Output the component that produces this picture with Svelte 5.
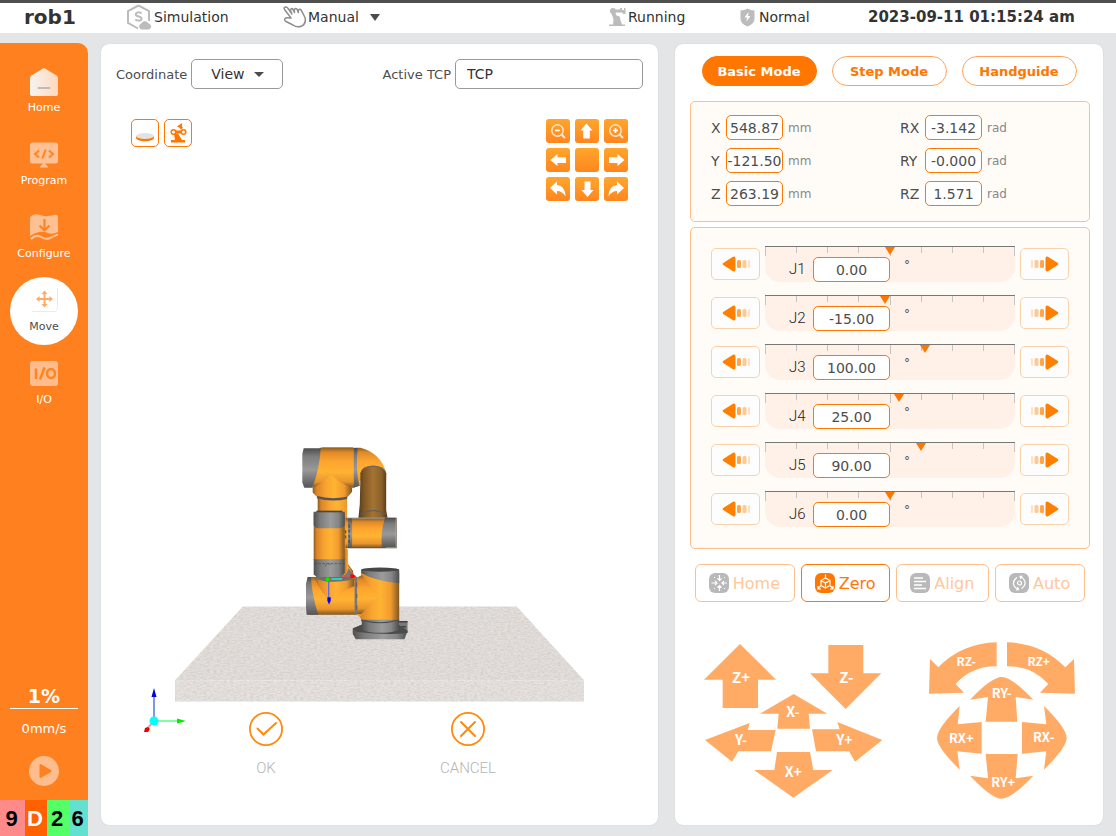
<script lang="ts">
  type Arrow = {
    label: string;
    x: number;
    y: number;
    w: number;
    h: number;
    d: string;
    tx: number;
    ty: number;
    size: number;
  };

  const modes = ["Basic Mode", "Step Mode", "Handguide"];
  let mode = $state("Basic Mode");
  let page = $state("Move");
  let coordinate = $state("View");
  let tcp = $state("TCP");

  const pages = ["Home", "Program", "Configure", "Move", "I/O"];

  const position = $state([
    { axis: "X", value: "548.87" },
    { axis: "Y", value: "-121.50" },
    { axis: "Z", value: "263.19" },
  ]);
  const rotation = $state([
    { axis: "RX", value: "-3.142" },
    { axis: "RY", value: "-0.000" },
    { axis: "RZ", value: "1.571" },
  ]);
  const joints = $state([
    { name: "J1", value: "0.00" },
    { name: "J2", value: "-15.00" },
    { name: "J3", value: "100.00" },
    { name: "J4", value: "25.00" },
    { name: "J5", value: "90.00" },
    { name: "J6", value: "0.00" },
  ]);

  // joint range is -360..360
  const markerPos = (value: string) => 50 + (Number(value) / 720) * 100;

  const checksum = ["9", "D", "2", "6"];

  // three canvas units to one pixel
  const linear = { x: 42, y: 42, w: 537, h: 465 };
  const linearArrows: Arrow[] = [
    { label: "Z+", x: 42, y: 42, w: 216, h: 192, d: "M150 42 258 149H204V234H98V149H42Z", tx: 153, ty: 158, size: 45 },
    { label: "Z-", x: 359, y: 45, w: 214, h: 192, d: "M414 45H519V130H573L466 237 359 130H414Z", tx: 468, ty: 158, size: 45 },
    { label: "X-", x: 210, y: 192, w: 202, h: 104, d: "M311 192 412 251H356L360 296H262L266 251H210Z", tx: 309, ty: 261, size: 42 },
    { label: "X+", x: 191, y: 367, w: 236, h: 137, d: "M260 367H359L369 421H427L309 504 191 421H252Z", tx: 309, ty: 443, size: 42 },
    { label: "Y-", x: 45, y: 280, w: 212, h: 116, d: "M45 331 179 280 173 301H257L243 365H145L126 396Z", tx: 153, ty: 346, size: 42 },
    { label: "Y+", x: 367, y: 277, w: 211, h: 119, d: "M578 331 443 277 450 299H367L379 365H478L496 396Z", tx: 464, ty: 346, size: 42 },
  ];
  const angular = { x: 717, y: 36, w: 438, h: 471 };
  const angularArrows: Arrow[] = [
    { label: "RZ-", x: 717, y: 36, w: 204, h: 156, d: "M920 37Q815 40 745 112L720 87 717 191 822 188 797 162Q845 108 920 109Z", tx: 829, ty: 108, size: 36 },
    { label: "RZ+", x: 950, y: 36, w: 205, h: 156, d: "M950 37Q1055 40 1125 112L1151 87 1154 191 1049 188 1074 162Q1026 108 950 109Z", tx: 1045, ty: 108, size: 36 },
    { label: "RY-", x: 840, y: 141, w: 190, h: 135, d: "M840 209Q905 141 935 141 965 141 1030 209L977 201 982 275H887L894 201Z", tx: 935, ty: 204, size: 39 },
    { label: "RX+", x: 741, y: 228, w: 135, h: 191, d: "M809 228Q741 295 741 324 741 352 809 419L802 364 875 371V276L803 283Z", tx: 814, ty: 339, size: 39 },
    { label: "RX-", x: 995, y: 228, w: 134, h: 191, d: "M1061 228Q1129 295 1129 324 1129 352 1061 419L1068 364 995 371V276L1068 283Z", tx: 1060, ty: 336, size: 39 },
    { label: "RY+", x: 840, y: 373, w: 190, h: 134, d: "M840 438Q905 507 935 507 965 507 1030 438L977 446 983 373H887L894 446Z", tx: 940, ty: 473, size: 39 },
  ];
</script>

{#snippet poseRow(row: { axis: string; value: string }, unit: string)}
  <div class="pose-row">
    <label for="pose-{row.axis}">{row.axis}</label>
    <input id="pose-{row.axis}" class="value" bind:value={row.value} />
    <span class="unit">{unit}</span>
  </div>
{/snippet}

{#snippet jogIcon()}
  <svg width="28" height="16" viewBox="0 0 28 16">
    <path d="M1.2 7 11 .8Q13.5 0 13.5 2.500V13.500Q13.5 16 11 15.200L1.200 9Q0 8 1.2 7Z" fill="#ff8000" />
    <rect x="15" y="4" width="4" height="8" rx="1.5" fill="#ffa64d" />
    <rect x="20.5" y="4" width="4" height="8" rx="1.5" fill="#ffc995" />
    <rect x="26" y="4" width="2" height="8" rx="1" fill="#ffe0c2" />
  </svg>
{/snippet}

{#snippet jogPad(box: { x: number; y: number; w: number; h: number }, arrows: Arrow[], cls: string)}
  <div class="pad {cls}">
    {#each arrows as a (a.label)}
      <button
        class="jog-arrow"
        aria-label="Jog {a.label}"
        style="left:{((a.x - box.x) / box.w) * 100}%;top:{((a.y - box.y) / box.h) * 100}%;width:{(a.w / box.w) * 100}%;height:{(a.h / box.h) * 100}%;"
      >
        <svg viewBox="{a.x} {a.y} {a.w} {a.h}">
          <path d={a.d} />
          <text x={a.tx} y={a.ty} font-size={a.size}>{a.label}</text>
        </svg>
      </button>
    {/each}
  </div>
{/snippet}

<div class="app">
  <header class="topbar">
    <h1>rob1</h1>
    <div class="status">
      <svg width="26" height="26" viewBox="0 0 26 26" fill="none" stroke="#bcbcbc">
        <path d="M12.500 1.500 2 7.200V18.800L12 24.500M12.500 1.500 23 7.200V17" stroke-width="2" />
        <path d="M15.500 9.500C14.500 7.800 9.800 7.900 9.800 10.400 9.800 13.200 15.600 11.800 15.600 14.700 15.600 17.200 10.600 17.100 9.400 15.200" stroke-width="2" />
        <path d="M15 25A3.200 3.200 0 0 1 15.500 19.500 4 4 0 0 1 22.500 20 2.600 2.600 0 0 1 23 25Z" fill="#bcbcbc" />
      </svg>
      <span>Simulation</span>
    </div>
    <button class="status manual">
      <svg width="24" height="22" viewBox="0 0 24 22" fill="none" stroke="#8d8d8d" stroke-width="1.5" stroke-linejoin="round">
        <path d="M8 12 1.500 3.500Q.5 1.500 2.500 1 4 .8 5 2.300L9 8 7.500 4.500Q7.400 2.500 9.500 2.600L11.500 6.500 11.300 3.500Q12.500 1.800 14 3L15.300 6.500 15.500 4Q17 2.500 18.200 4.200L22 11.500Q23.500 17 19 20 14 22 10 19L3 15.500Q.5 13.500 2.500 12 4 11.300 8 12Z" />
      </svg>
      <span>Manual</span>
      <i class="caret"></i>
    </button>
    <div class="status">
      <svg width="18" height="20" viewBox="0 0 18 20" fill="#bcbcbc">
        <circle cx="5" cy="4" r="3" />
        <path d="M5 2.500H12V1H14V3H16V1H17.500V7H15.500L14 5.500H7Z" />
        <path d="M3 5.500 7 5 9.500 10.500 5.500 12Z" />
        <circle cx="9" cy="12" r="3.2" />
        <path d="M5.500 12H12L14 17.500H17V19H1V17.500H5Z" />
      </svg>
      <span>Running</span>
    </div>
    <div class="status normal">
      <svg width="15" height="19" viewBox="0 0 15 19">
        <path d="M7.500.5Q10.500 2.500 14.500 2.500V11Q14.500 15.500 7.500 18.500 .5 15.500.5 11V2.500Q4.500 2.500 7.500.5Z" fill="#bcbcbc" />
        <path d="M8.500 4 4.500 9.500H7L6.500 13.500 10.500 8H8Z" fill="#fff" />
      </svg>
      <span>Normal</span>
    </div>
    <time datetime="2023-09-11T01:15:24">2023-09-11 01:15:24 am</time>
  </header>

  <div class="body">
    <nav class="sidebar">
      {#each pages as name (name)}
        <button class="nav-item" class:active={page === name} onclick={() => (page = name)}>
          <svg width="28" height="28" viewBox="0 0 28 28">
            {#if name === "Home"}
              <defs>
                <linearGradient id="home-fill">
                  <stop offset="0" stop-color="#f6f3f1" />
                  <stop offset="1" stop-color="#ffd9bb" />
                </linearGradient>
              </defs>
              <path d="M13 .5Q14 0 15 .5L26.500 7.500Q28 8.500 28 10V26Q28 28 26 28H2Q0 28 0 26V10Q0 8.500 1.500 7.500Z" fill="url(#home-fill)" />
              <rect x="7.5" y="19" width="13" height="2" rx="1" fill="#bbb" />
            {:else if name === "Program"}
              <rect y="1.5" width="28" height="21" rx="2.5" fill="#ffc093" />
              <path d="M14 21 18.500 26.500H9.500Z" fill="#ffc093" />
              <path d="M9 9.500 5 13 9 16.500M19 9.500 23 13 19 16.500M15.700 8.500 12.300 17.500" fill="none" stroke="#ff8521" stroke-width="2" />
            {:else if name === "Configure"}
              <path d="M0 4Q0 2 2 1.500 6-.5 10 1T18 2 24 1Q28 0 28 3V18Q22 21 18 19T9 18 0 22Z" fill="#ffc093" />
              <path d="M14.500 5V16M9.500 11.500 14.500 16.500 19.500 11.500" fill="none" stroke="#ff8521" stroke-width="2.2" />
              <path d="M1 25Q6 20 11 23T20 24 28 20.500" fill="none" stroke="#ffc093" stroke-width="2" />
            {:else if name === "Move"}
              <path d="M27.500 1V20Q27.500 24.500 24 24.500H2" fill="none" stroke="#ffe6d2" />
              <path d="M14.500 5V19M7.500 12H21.500" stroke="#ffab66" stroke-width="2" />
              <path d="M14.500 3.500 17.500 7H11.500ZM14.500 20.500 17.500 17H11.500ZM6 12 9.500 9V15ZM23 12 19.500 9V15Z" fill="#ffab66" />
            {:else}
              <rect y="1" width="28" height="25" rx="3" fill="#ffbd8d" />
              <path d="M6 8.500V19M10 19.500 14.500 7.500" stroke="#ff8521" stroke-width="2.5" />
              <ellipse cx="21" cy="13.5" rx="4" ry="4.4" fill="none" stroke="#ff8521" stroke-width="2.5" />
            {/if}
          </svg>
          <span>{name}</span>
        </button>
      {/each}

      <div class="speed">
        <strong>1%</strong>
        <span>0mm/s</span>
        <button class="play" aria-label="Play">
          <svg width="30" height="30" viewBox="0 0 30 30">
            <circle cx="15" cy="15" r="15" fill="#ffbd8e" />
            <path d="M10.500 9Q10.500 7.500 12 8.200L22 14Q23 15 22 16L12 21.800Q10.500 22.500 10.500 21Z" fill="#ff801e" />
          </svg>
        </button>
      </div>
      <div class="checksum">
        {#each checksum as char, i (i)}
          <span class="c{i}">{char}</span>
        {/each}
      </div>
    </nav>

    <main class="workspace">
      <section class="card scene-card">
        <div class="fields">
          <div class="field">
            <label for="coordinate">Coordinate</label>
            <div class="select">
              <select id="coordinate" bind:value={coordinate}>
                <option>View</option>
                <option>Base</option>
                <option>Tool</option>
              </select>
              <i class="caret small"></i>
            </div>
          </div>
          <div class="field">
            <label for="tcp">Active TCP</label>
            <input id="tcp" class="tcp" bind:value={tcp} />
          </div>
        </div>

        <div class="toolbar">
          <div class="toggles">
            <button aria-label="Toggle table">
              <svg width="20" height="20" viewBox="0 0 20 20">
                <path d="M1 13V14.500C1 19.500 19 19.500 19 14.500V13Z" fill="#ff7600" />
                <ellipse cx="10" cy="13" rx="9" ry="3" fill="#e2e2e2" />
              </svg>
            </button>
            <button aria-label="Toggle robot">
              <svg width="20" height="20" viewBox="0 0 20 20" fill="#ff7600">
                <path d="M3 17H17V19.500H3ZM6 11 10 10.500 14 17H7ZM9 3.500 14 0V3.500L15 5 13 6.500 11.500 4.800Z" />
                <path d="M7 9H13" stroke="#ff7600" stroke-width="3" />
                <circle cx="5.5" cy="9" r="2.3" fill="#fff" stroke="#ff7600" stroke-width="1.5" />
                <circle cx="15.5" cy="9" r="2.3" fill="#fff" stroke="#ff7600" stroke-width="1.5" />
              </svg>
            </button>
          </div>
          <div class="camera">
            <button aria-label="Zoom out">
              <svg width="24" height="24" viewBox="0 0 24 24" fill="none" stroke="#ffe9d2" stroke-width="1.4">
                <circle cx="11.5" cy="11.5" r="5.7" />
                <path d="M15.500 15.500 19 19" stroke-width="2" />
                <path d="M9 11.500H14" stroke="#fff" stroke-width="1.6" />
              </svg>
            </button>
            <button aria-label="Pan up">
              <svg width="24" height="24" viewBox="0 0 24 24" fill="#fff"><path d="M11.500 4.500 17.500 11.500H14.800V19.500H8.200V11.500H5.500Z" /></svg>
            </button>
            <button aria-label="Zoom in">
              <svg width="24" height="24" viewBox="0 0 24 24" fill="none" stroke="#ffe9d2" stroke-width="1.4">
                <circle cx="11.5" cy="11.5" r="5.7" />
                <path d="M15.500 15.500 19 19" stroke-width="2" />
                <path d="M9 11.500H14M11.500 9V14" stroke="#fff" stroke-width="1.6" />
              </svg>
            </button>
            <button aria-label="Pan left">
              <svg width="24" height="24" viewBox="0 0 24 24" fill="#fff"><path d="M4.500 12 11.500 6V9.200H20V15H11.500V18Z" /></svg>
            </button>
            <button aria-label="Reset view"></button>
            <button aria-label="Pan right">
              <svg width="24" height="24" viewBox="0 0 24 24" fill="#fff"><path d="M20.500 12 13.500 6V9.200H5V15H13.500V18Z" /></svg>
            </button>
            <button aria-label="Orbit left">
              <svg width="24" height="24" viewBox="0 0 24 24" fill="#fff"><path d="M4 11 11 4.500V8Q19.500 9 19.500 19.500 16.500 14 11 14V17.500Z" /></svg>
            </button>
            <button aria-label="Pan down">
              <svg width="24" height="24" viewBox="0 0 24 24" fill="#fff"><path d="M12.500 20 18.500 13H15.500V4.500H9.500V13H6.500Z" /></svg>
            </button>
            <button aria-label="Orbit right">
              <svg width="24" height="24" viewBox="0 0 24 24" fill="#fff"><path d="M20 11 13 4.500V8Q4.500 9 4.500 19.500 7.500 14 13 14V17.500Z" /></svg>
            </button>
          </div>
        </div>

        <svg class="scene" viewBox="45 54 1224 762" aria-label="Robot model">
          <defs>
            <filter id="stone" x="0" y="0" width="1" height="1">
              <feTurbulence type="fractalNoise" baseFrequency=".1 .22" numOctaves="3" seed="4" />
              <feColorMatrix values="0 0 0 0 .5  0 0 0 0 .42  0 0 0 0 .4  .8 0 0 0 -.28" />
              <feComposite in2="SourceGraphic" operator="in" result="grain" />
              <feMerge>
                <feMergeNode in="SourceGraphic" />
                <feMergeNode in="grain" />
              </feMerge>
            </filter>
            <linearGradient id="tube-v">
              <stop offset="0" stop-color="#8f5e20" />
              <stop offset=".1" stop-color="#db8528" />
              <stop offset=".35" stop-color="#faa52f" />
              <stop offset=".55" stop-color="#ffb333" />
              <stop offset=".8" stop-color="#f19b2e" />
              <stop offset="1" stop-color="#805722" />
            </linearGradient>
            <linearGradient id="tube-h" x2="0" y2="1">
              <stop offset="0" stop-color="#8f5e20" />
              <stop offset=".12" stop-color="#df8a29" />
              <stop offset=".35" stop-color="#ffa52f" />
              <stop offset=".6" stop-color="#ffb333" />
              <stop offset=".85" stop-color="#e9952d" />
              <stop offset="1" stop-color="#7e5520" />
            </linearGradient>
            <linearGradient id="tube-dark">
              <stop offset="0" stop-color="#553b19" />
              <stop offset=".2" stop-color="#805826" />
              <stop offset=".5" stop-color="#a57331" />
              <stop offset=".8" stop-color="#8b602a" />
              <stop offset="1" stop-color="#4b3518" />
            </linearGradient>
            <linearGradient id="metal-v">
              <stop offset="0" stop-color="#505050" />
              <stop offset=".2" stop-color="#7a7a7a" />
              <stop offset=".55" stop-color="#9c9c9c" />
              <stop offset=".8" stop-color="#858585" />
              <stop offset="1" stop-color="#4e4e4e" />
            </linearGradient>
            <linearGradient id="metal-h" x2="0" y2="1">
              <stop offset="0" stop-color="#4d4d4d" />
              <stop offset=".2" stop-color="#7c7c7c" />
              <stop offset=".55" stop-color="#999" />
              <stop offset="1" stop-color="#555" />
            </linearGradient>
          </defs>

          <g filter="url(#stone)">
            <path d="M248 531H1068L1269 752H45Z" fill="#e3dfdc" />
            <path d="M45 752H1269V816H45Z" fill="#e6e2df" />
          </g>

          <!-- upper arm and elbow -->
          <path d="M582 56H600Q660 72 677 130V155H598V170L582 175Z" fill="url(#tube-h)" />
          <path d="M598 225 600 135Q604 112 638 111 672 112 677 135V243L681 266H594Z" fill="url(#tube-dark)" />
          <path d="M600 135Q604 112 638 111 672 112 677 135M600 255Q638 233 677 255" fill="none" stroke="#5e5e5e" stroke-width="3" />
          <path d="M472 200H560V400L578 425V445H472Z" fill="url(#tube-v)" />
          <path d="M478 56H582V176H456Z" fill="url(#tube-h)" />
          <path d="M430 58H481Q478 120 456 176H432L426 160V75Z" fill="url(#metal-h)" />
          <path d="M484 54H578" stroke="#555" stroke-width="3" />
          <path d="M580 57H592Q585 115 596 170L580 175Z" fill="url(#metal-h)" />
          <path d="M457 176Q490 162 512 135 535 162 575 176V188L560 206Q512 218 470 204L457 190Z" fill="url(#tube-v)" />
          <path d="M470 204Q512 216 560 206" fill="none" stroke="#555" stroke-width="7" />

          <!-- forearm link -->
          <path d="M555 268H676V356H555Z" fill="url(#tube-h)" />
          <path d="M673 266H706V355H664Q660 310 673 266Z" fill="url(#metal-h)" />
          <path d="M563 268H575V356H563Z" fill="url(#metal-h)" />
          <path d="M556 303V328M566 286V346" stroke="#4b3a22" stroke-width="3" stroke-dasharray="10 5" />
          <path d="M555 267H708V356H562" fill="none" stroke="#5b5140" stroke-width="2" />

          <!-- wrist -->
          <path d="M553 360H563V412L578 430V448H553Z" fill="url(#tube-v)" />
          <path d="M540 445Q560 440 564 417L580 434 572 452H540Z" fill="#777" />
          <path d="M460 252H553V392H460Z" fill="url(#tube-v)" />
          <path d="M460 248H553V287Q550 297 538 297H475Q462 297 460 287Z" fill="url(#metal-v)" />
          <path d="M468 247H546" stroke="#474747" stroke-width="5" />
          <path d="M460 390H553V430L542 447H472L460 435Z" fill="url(#metal-v)" />
          <path d="M462 403H553M495 411A8 7 0 0 1 512 411" fill="none" stroke="#4b4b4b" stroke-width="2" stroke-dasharray="8 4" />

          <!-- shoulder -->
          <path d="M442 443H590V556H442Z" fill="url(#tube-h)" />
          <path d="M442 443H452Q455 500 474 556H439L437 535V463Z" fill="url(#metal-h)" />
          <path d="M466 446Q510 465 580 448L582 470Q550 482 510 514Q485 495 464 450Z" fill="url(#tube-v)" />
          <path d="M470 445Q505 460 575 447" fill="none" stroke="#707070" stroke-width="9" />
          <path d="M588 446 606 436V580Q600 558 588 555Z" fill="url(#tube-h)" />
          <path d="M602 430H716V576H602V552H590V449H602Z" fill="url(#tube-v)" />
          <path d="M590 446 604 438Q632 474 655 500Q633 525 602 554H590Z" fill="url(#tube-h)" />
          <path d="M586 444V556" stroke="#777" stroke-width="7" />
          <path d="M589 460V550" stroke="#444" stroke-width="2" stroke-dasharray="12 22" />
          <path d="M602 422H716V462Q645 455 602 431Z" fill="url(#metal-v)" />
          <ellipse cx="659" cy="421" rx="57" ry="6" fill="#464646" />

          <!-- base -->
          <path d="M700 576H741V604H700Z" fill="#7a7a7a" />
          <path d="M710 577H741M722 592H736" stroke="#404040" stroke-width="4" />
          <path d="M577 597 603 586H715L741 604 732 629H586L577 614Z" fill="url(#metal-v)" />
          <path d="M577 597 603 586H715L741 604V611Q680 618 590 608Z" fill="#4b4b4b" />
          <path d="M604 571H715V600Q700 610 660 610T604 600Z" fill="url(#metal-v)" />
          <path d="M602 572Q658 588 716 572" fill="none" stroke="#4d4d4d" stroke-width="3" />

          <!-- tool frame -->
          <path d="M513 449H545" stroke="#0ff" stroke-width="4" />
          <path d="M543 440H570" stroke="#e05050" stroke-width="4" />
          <path d="M570 435H577L588 441 577 446H570Z" fill="#f00" />
          <path d="M505 455V505" stroke="#6666e8" stroke-width="4" />
          <path d="M501 504H511V514L506 525 501 514Z" fill="#00f" />
          <circle cx="502" cy="450" r="6" fill="#0e0" />
        </svg>

        <svg class="axes" width="44" height="50" viewBox="0 0 44 50" aria-hidden="true">
          <path d="M11 34V9" stroke="#8294ec" stroke-width="2" />
          <path d="M11 34H36" stroke="#80ffa0" stroke-width="2" />
          <path d="M11 34 3 43" stroke="#ff9a9a" stroke-width="2" />
          <path d="M11 1 13.500 10H8.500Z" fill="#00d" />
          <path d="M43 34 34 31.500V36.500Z" fill="#0e0" />
          <path d="M2 41 5 40 7 42 5 45H1Z" fill="#e00" />
          <circle cx="11" cy="34" r="4.5" fill="#0ff" />
        </svg>

        <div class="confirm">
          <button>
            <svg width="34" height="34" viewBox="0 0 34 34" fill="none" stroke="#ff8a0d" stroke-width="1.8" stroke-linecap="round">
              <circle cx="17" cy="17" r="16.1" />
              <path d="M8.500 16.500 14.500 22.500 27 11" stroke-width="2" />
            </svg>
            <span>OK</span>
          </button>
          <button>
            <svg width="34" height="34" viewBox="0 0 34 34" fill="none" stroke="#ff8a0d" stroke-width="1.8" stroke-linecap="round">
              <circle cx="17" cy="17" r="16.1" />
              <path d="M10 10 24 24M24 10 10 24" stroke-width="2" />
            </svg>
            <span>CANCEL</span>
          </button>
        </div>
      </section>

      <section class="card control-card">
        <div class="modes">
          {#each modes as name (name)}
            <button class:selected={mode === name} onclick={() => (mode = name)}>{name}</button>
          {/each}
        </div>

        <div class="box pose">
          <div class="pose-col">
            {#each position as row (row.axis)}
              {@render poseRow(row, "mm")}
            {/each}
          </div>
          <div class="pose-col wide">
            {#each rotation as row (row.axis)}
              {@render poseRow(row, "rad")}
            {/each}
          </div>
        </div>

        <div class="box joints">
          {#each joints as joint (joint.name)}
            <div class="joint">
              <button class="jog" aria-label="{joint.name} minus">{@render jogIcon()}</button>
              <div class="track">
                <div class="ticks">
                  {#each Array(9) as _, i (i)}
                    <i class:long={i % 4 === 0}></i>
                  {/each}
                </div>
                <i class="marker" style="left:{markerPos(joint.value)}%;"></i>
                <label for="joint-{joint.name}">{joint.name}</label>
                <input id="joint-{joint.name}" class="value" bind:value={joint.value} />
                <span class="degree">°</span>
              </div>
              <button class="jog plus" aria-label="{joint.name} plus">{@render jogIcon()}</button>
            </div>
          {/each}
        </div>

        <div class="actions">
          <button>
            <svg width="20" height="20" viewBox="0 0 20 20" fill="none" stroke="#fff" stroke-width="1.2">
              <rect width="20" height="20" rx="6" fill="#b9b9b9" stroke="none" />
              <path d="M10.500 2V7M10.500 18V13M2.500 10H7.500M18 10H13M8.500 5.500 10.500 7.500 12.500 5.500M8.500 14.500 10.500 12.500 12.500 14.500M6 8 8 10 6 12M15 8 13 10 15 12" />
              <path d="M5 4.500H6M15 4.500H16M5 15.500H6M15 15.500H16" />
            </svg>
            Home
          </button>
          <button class="enabled">
            <svg width="20" height="20" viewBox="0 0 20 20" fill="none" stroke="#fff" stroke-width="1.2">
              <rect width="20" height="20" rx="6" fill="#ff7600" stroke="none" />
              <path d="M10.500 5 15 7.500V12.500L10.500 15 6 12.500V7.500ZM6 7.500 10.500 10 15 7.500M10.500 10V15M10.500 1.500V5M6 12.500 3 15.500M15 12.500 18 15.500M3 13V16H6M18 13V16H15" />
            </svg>
            Zero
          </button>
          <button>
            <svg width="20" height="20" viewBox="0 0 20 20" fill="none" stroke="#fff" stroke-width="1.5">
              <rect width="20" height="20" rx="6" fill="#b9b9b9" stroke="none" />
              <path d="M4 5H13M4 8.500H16M4 12H12M4 15.500H16" />
            </svg>
            Align
          </button>
          <button>
            <svg width="20" height="20" viewBox="0 0 20 20" fill="none" stroke="#fff" stroke-width="1.2">
              <rect width="20" height="20" rx="6" fill="#b9b9b9" stroke="none" />
              <circle cx="10.5" cy="10" r="2" />
              <path d="M8 4.500Q3 8 5 12.500 6 15 9 16.500M7 17 9.500 16.500 8.500 14M12.500 15.500Q17.500 12 15.500 7.500 14.500 5 11.500 3.500M13.500 3 11 3.500 12 6" />
            </svg>
            Auto
          </button>
        </div>

        <div class="pads">
          {@render jogPad(linear, linearArrows, "linear")}
          {@render jogPad(angular, angularArrows, "angular")}
        </div>
      </section>
    </main>
  </div>
</div>

<style>
  :global(body) {
    margin: 0;
    background: #e3e5e7;
  }
  .app {
    --orange: #ff7600;
    --orange-soft: #ffbf8a;
    min-height: 100vh;
    display: flex;
    flex-direction: column;
    font-family: "DejaVu Sans", sans-serif;
    font-size: 14px;
    color: #4d4d4d;
  }
  .app * {
    box-sizing: border-box;
  }
  button,
  input,
  select {
    margin: 0;
    padding: 0;
    font: inherit;
    color: inherit;
  }
  button {
    border: 0;
    background: none;
    cursor: pointer;
  }
  svg {
    display: block;
    flex-shrink: 0;
  }
  .caret {
    border: 5px solid transparent;
    border-top: 7px solid #4a4d50;
    border-bottom: 0;
  }
  .caret.small {
    border-top-width: 5px;
  }

  .topbar {
    display: grid;
    grid-template-columns: 126fr 157fr 325fr 132fr 128fr 248fr;
    align-items: center;
    height: 33px;
    padding-bottom: 2px;
    border-top: 3px solid #505050;
    background: #fff;
    color: #333;
  }
  h1 {
    margin: 0;
    padding-left: 24px;
    font-size: 20px;
    line-height: 24px;
  }
  .status {
    display: flex;
    align-items: center;
    gap: 2px;
    white-space: nowrap;
  }
  .status.manual {
    gap: 1px;
  }
  .status.normal {
    gap: 4px;
  }
  .manual .caret {
    margin-left: 10px;
  }
  time {
    font-size: 15px;
    font-weight: bold;
    white-space: nowrap;
  }

  .body {
    flex: 1;
    display: flex;
  }
  .sidebar {
    width: 88px;
    flex-shrink: 0;
    margin-top: 10px;
    padding-top: 15px;
    border-radius: 0 10px 0 0;
    background: #ff801e;
    color: #fff;
    display: flex;
    flex-direction: column;
    align-items: center;
    gap: 5px;
  }
  .nav-item {
    width: 68px;
    height: 68px;
    border-radius: 50%;
    display: flex;
    flex-direction: column;
    align-items: center;
    justify-content: center;
    gap: 4px;
    font-size: 11px;
    line-height: 16px;
  }
  .nav-item.active {
    background: #fff;
    color: #4d4d4d;
  }
  .speed {
    width: 68px;
    margin-top: auto;
    display: flex;
    flex-direction: column;
    align-items: center;
    font-size: 13px;
  }
  .speed strong {
    width: 100%;
    border-bottom: 1px solid #fff;
    font-size: 19px;
    line-height: 24px;
    text-align: center;
  }
  .speed span {
    margin: 12px 0 19px;
    line-height: 16px;
  }
  .checksum {
    align-self: stretch;
    display: grid;
    grid-template-columns: 25fr 22fr 22fr 19fr;
    margin-top: 9px;
    font: bold 22px/34px "Liberation Sans", sans-serif;
    color: #000;
  }
  .checksum span {
    padding: 2px 2px 0 0;
    text-align: center;
  }
  .c0 {
    background: #ff8a8a;
  }
  .checksum .c1 {
    background: #ff6000;
    color: #fff;
  }
  .c2 {
    background: #54ff68;
  }
  .c3 {
    background: #62e0d0;
  }

  .workspace {
    flex: 1;
    min-width: 0;
    display: grid;
    grid-template-columns: 557fr 428fr;
    gap: 17px;
    padding: 11px 13px;
  }
  .card {
    min-width: 0;
    border-radius: 8px;
    background: #fff;
    display: flex;
    flex-direction: column;
    box-shadow: 0 0 1px #bbb;
  }

  .scene-card {
    position: relative;
    padding: 15px 15px 48px;
  }
  .fields {
    display: flex;
    justify-content: space-between;
  }
  .field {
    display: flex;
    align-items: center;
    gap: 4px;
  }
  .field label {
    font-size: 13px;
  }
  .select {
    position: relative;
  }
  .select select {
    appearance: none;
    width: 92px;
    padding-left: 19px;
  }
  .select select,
  .tcp {
    height: 30px;
    border: 1px solid #999;
    border-radius: 5px;
    background: #fff;
    color: #333;
  }
  .select .caret {
    position: absolute;
    right: 19px;
    top: 13px;
    pointer-events: none;
  }
  .tcp {
    width: 188px;
    padding-left: 11px;
  }
  .toolbar {
    display: flex;
    justify-content: space-between;
    align-items: flex-start;
    padding: 30px 15px 0;
    margin-bottom: 40px;
  }
  .toggles {
    display: flex;
    gap: 5px;
  }
  .toggles button {
    width: 28px;
    height: 28px;
    border: 1px solid var(--orange);
    border-radius: 5px;
    display: grid;
    place-items: center;
  }
  .camera {
    display: grid;
    grid-template-columns: repeat(3, 24px);
    grid-auto-rows: 24px;
    gap: 5px;
  }
  .camera button {
    border-radius: 3px;
    background: linear-gradient(#ffa62b, #ff861f);
  }
  .scene {
    width: 100%;
    max-width: 409px;
    margin: auto auto 0;
  }
  .axes {
    position: absolute;
    left: 42px;
    bottom: 88px;
  }
  .confirm {
    display: grid;
    grid-template-columns: 1fr 1fr;
    margin: 10px 74px 0 49px;
  }
  .confirm button {
    display: flex;
    flex-direction: column;
    align-items: center;
    gap: 13px;
    font: 300 15px/18px Roboto, sans-serif;
    color: #b4b4b4;
  }

  .control-card {
    padding: 12px 13px 26px 15px;
  }
  .modes {
    display: flex;
    justify-content: center;
    gap: 15px;
    padding-right: 2px;
  }
  .modes button {
    width: 115px;
    height: 30px;
    border: 1px solid #ffa15a;
    border-radius: 15px;
    font-size: 13px;
    font-weight: bold;
    color: var(--orange);
  }
  .modes .selected {
    border-color: var(--orange);
    background: var(--orange);
    color: #fff;
  }
  .box {
    border: 1px solid var(--orange-soft);
    border-radius: 5px;
    background: #fffcf8;
  }
  .value {
    height: 25px;
    border: 1px solid var(--orange);
    border-radius: 5px;
    background: #fff;
    text-align: center;
  }
  .pose {
    display: grid;
    grid-template-columns: 189fr 169fr;
    margin-top: 15px;
    padding: 13px 20px 15px;
  }
  .pose-col {
    display: flex;
    flex-direction: column;
    gap: 8px;
  }
  .pose-row {
    display: flex;
    align-items: center;
  }
  .pose-row label {
    width: 15px;
  }
  .wide label {
    width: 25px;
  }
  .pose-row .value {
    width: 57px;
  }
  .unit {
    margin-left: 5px;
    font-size: 12px;
    color: #888;
  }
  .joints {
    display: flex;
    flex-direction: column;
    gap: 13px;
    margin-top: 5px;
    padding: 18px 20px 21px;
  }
  .joint {
    display: grid;
    grid-template-columns: 49px 1fr 49px;
    align-items: center;
    gap: 5px;
  }
  .jog {
    height: 32px;
    border: 1px solid #fad2aa;
    border-radius: 5px;
    background: #fdfdfd;
    display: grid;
    place-items: center;
  }
  .jog.plus svg {
    transform: scaleX(-1);
  }
  .track {
    position: relative;
    display: flex;
    align-items: flex-end;
    height: 36px;
    padding-left: 24px;
    border-top: 1px solid #777;
    border-radius: 0 0 15px 15px;
    background: #fff1e8;
  }
  .ticks {
    position: absolute;
    inset: 0;
    display: flex;
    justify-content: space-between;
  }
  .ticks i {
    width: 1px;
    height: 6px;
    background: #c4c4c4;
  }
  .ticks .long {
    height: 9px;
  }
  .marker {
    position: absolute;
    top: 0;
    border: 5px solid transparent;
    border-top: 8px solid var(--orange);
    border-bottom: 0;
    transform: translateX(-50%);
  }
  .track label {
    position: relative;
    width: 24px;
    font: 300 15px/25px Roboto, sans-serif;
    color: #222;
  }
  .track .value {
    position: relative;
    width: 77px;
  }
  .degree {
    align-self: center;
    margin-left: 14px;
    font-size: 12px;
  }
  .actions {
    display: grid;
    grid-template-columns: 100fr 90fr 93fr 90fr;
    gap: 6px;
    margin: 15px 5px 0;
  }
  .actions button {
    display: flex;
    align-items: center;
    justify-content: center;
    gap: 4px;
    height: 38px;
    padding-right: 1px;
    border: 1px solid var(--orange-soft);
    border-radius: 6px;
    font-size: 16px;
    color: #ffc79b;
  }
  .actions .enabled {
    border-color: var(--orange);
    color: var(--orange);
  }
  .pads {
    display: flex;
    justify-content: space-between;
    align-items: flex-end;
    margin-top: 40px;
    padding: 0 15px 0 14px;
  }
  .pad {
    position: relative;
  }
  .linear {
    width: 179px;
    height: 155px;
  }
  .angular {
    width: 146px;
    height: 157px;
  }
  .jog-arrow {
    position: absolute;
    pointer-events: none;
  }
  .jog-arrow svg {
    width: 100%;
    height: 100%;
    overflow: visible;
  }
  .jog-arrow path {
    fill: #ffab66;
    pointer-events: auto;
  }
  .jog-arrow text {
    fill: #fff;
    font-family: "Noto Sans CJK SC", sans-serif;
    font-weight: 700;
    text-anchor: middle;
  }
</style>
